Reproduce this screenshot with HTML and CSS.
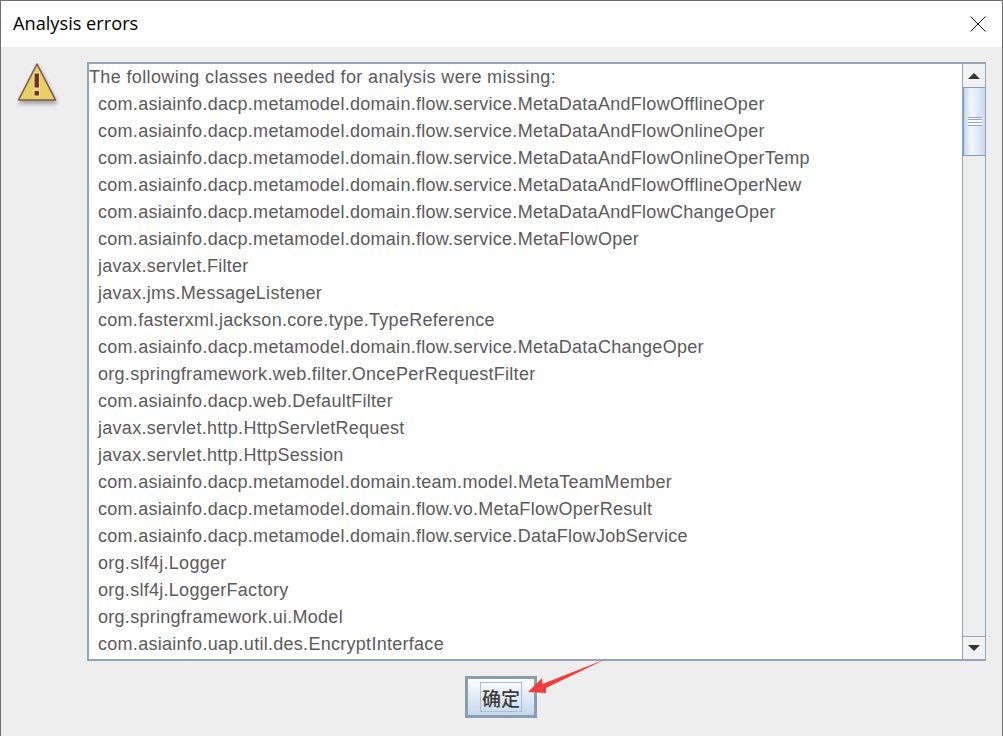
FILE: index.html
```html
<!DOCTYPE html>
<html lang="en">
<head>
  <meta charset="UTF-8">
  <title>Analysis errors</title>
  <link rel="stylesheet" href="styles.css">
</head>
<body>
  <div class="dialog">
    <div class="title-bar">
      <span class="title">Analysis errors</span>
      <svg class="close-icon" width="16" height="16" viewBox="0 0 16 16">
        <path d="M0.5 0.5L15.5 15.5M15.5 0.5L0.5 15.5" stroke="#111" stroke-width="1" fill="none"/>
      </svg>
    </div>

    <div class="content">
      <div class="message-row">
        <svg class="warn-icon" width="44" height="44" viewBox="0 0 44 44">
          <path d="M21 1L39.500 37H2.500Z" fill="#e8cf63" stroke="#7d5a4c" stroke-width="1.6" stroke-linejoin="round"/>
          <rect x="18" y="10" width="5.500" height="15" fill="#7b2f2a" stroke="#f3e6a6" stroke-width="1"/>
          <rect x="18" y="27.500" width="5.500" height="5.500" fill="#7b2f2a" stroke="#f3e6a6" stroke-width="1"/>
        </svg>

        <div class="text-pane">
          <div class="lines">
            <div class="line first">The following classes needed for analysis were missing:</div>
            <div class="line">com.asiainfo.dacp.metamodel.domain.flow.service.MetaDataAndFlowOfflineOper</div>
            <div class="line">com.asiainfo.dacp.metamodel.domain.flow.service.MetaDataAndFlowOnlineOper</div>
            <div class="line">com.asiainfo.dacp.metamodel.domain.flow.service.MetaDataAndFlowOnlineOperTemp</div>
            <div class="line">com.asiainfo.dacp.metamodel.domain.flow.service.MetaDataAndFlowOfflineOperNew</div>
            <div class="line">com.asiainfo.dacp.metamodel.domain.flow.service.MetaDataAndFlowChangeOper</div>
            <div class="line">com.asiainfo.dacp.metamodel.domain.flow.service.MetaFlowOper</div>
            <div class="line">javax.servlet.Filter</div>
            <div class="line">javax.jms.MessageListener</div>
            <div class="line">com.fasterxml.jackson.core.type.TypeReference</div>
            <div class="line">com.asiainfo.dacp.metamodel.domain.flow.service.MetaDataChangeOper</div>
            <div class="line">org.springframework.web.filter.OncePerRequestFilter</div>
            <div class="line">com.asiainfo.dacp.web.DefaultFilter</div>
            <div class="line">javax.servlet.http.HttpServletRequest</div>
            <div class="line">javax.servlet.http.HttpSession</div>
            <div class="line">com.asiainfo.dacp.metamodel.domain.team.model.MetaTeamMember</div>
            <div class="line">com.asiainfo.dacp.metamodel.domain.flow.vo.MetaFlowOperResult</div>
            <div class="line">com.asiainfo.dacp.metamodel.domain.flow.service.DataFlowJobService</div>
            <div class="line">org.slf4j.Logger</div>
            <div class="line">org.slf4j.LoggerFactory</div>
            <div class="line">org.springframework.ui.Model</div>
            <div class="line">com.asiainfo.uap.util.des.EncryptInterface</div>
          </div>

          <div class="scrollbar">
            <div class="scroll-btn"><span class="arrow-up"></span></div>
            <div class="scroll-thumb">
              <span class="grip"></span>
            </div>
            <div class="scroll-track"></div>
            <div class="scroll-btn down"><span class="arrow-down"></span></div>
          </div>
        </div>
      </div>

      <div class="button-row">
        <button class="ok-btn"><span class="ok-label">确定</span></button>
      </div>
    </div>

    <!-- red annotation arrow over the button -->
    <svg class="annotation" width="90" height="40" viewBox="0 0 90 40">
      <path d="M1 34L15 20L15.500 26L79 1L19 30L19 35Z" fill="#f23b3b"/>
    </svg>
  </div>
</body>
</html>
```

FILE: styles.css
```css
html, body {
  margin: 0;
  padding: 0;
}

body {
  width: 1003px;
  height: 736px;
  overflow: hidden;
}

.dialog {
  position: relative;
  box-sizing: border-box;
  width: 1003px;
  height: 736px;
  display: flex;
  flex-direction: column;
  border: 1px solid #6e6e6e;
  border-bottom: none;
  background: #eeeeee;
}

.title-bar {
  height: 46px;
  flex: none;
  display: flex;
  align-items: center;
  justify-content: space-between;
  padding: 0 16px 0 12px;
  background: #fff;
}

.title {
  font-family: "Open Sans", sans-serif;
  font-size: 18.200px;
  line-height: 44px;
  margin-bottom: 2px;
  color: #000;
}

.close-icon {
  display: block;
}

.content {
  flex: 1;
  display: flex;
  flex-direction: column;
  padding-top: 15px;
}

.message-row {
  display: flex;
  align-items: flex-start;
  padding-left: 15px;
}

.warn-icon {
  display: block;
  flex: none;
  margin-top: 1px;
  margin-right: 27px;
  filter: drop-shadow(1px 3px 2px rgba(0, 0, 0, 0.35));
}

.text-pane {
  box-sizing: border-box;
  width: 899px;
  height: 599px;
  display: flex;
  border: 1px solid #92a4b6;
  border-top-width: 2px;
  border-bottom-width: 2px;
  border-left-width: 2px;
  background: #fff;
}

.lines {
  flex: 1;
  overflow: hidden;
  font-family: "Liberation Sans", Arial, sans-serif;
  font-size: 18px;
  line-height: 27px;
  letter-spacing: 0.28px;
  color: #5a5a5a;
  white-space: nowrap;
}

.line {
  padding-left: 9px;
}

.line.first {
  padding-left: 0;
  letter-spacing: 0.36px;
}

.scrollbar {
  width: 23px;
  flex: none;
  display: flex;
  flex-direction: column;
  box-sizing: border-box;
  border-left: 1px solid #92a4b6;
  background: #eeeeee;
}

.scroll-btn {
  height: 23px;
  flex: none;
  display: flex;
  align-items: center;
  justify-content: center;
  background: #f2f2f2;
}

.scroll-btn.down {
  border-top: 1px solid #92a4b6;
  box-sizing: border-box;
}

.arrow-up {
  border-left: 6px solid transparent;
  border-right: 6px solid transparent;
  border-bottom: 6px solid #333;
}

.arrow-down {
  border-left: 6px solid transparent;
  border-right: 6px solid transparent;
  border-top: 6px solid #333;
}

.scroll-thumb {
  height: 69px;
  flex: none;
  box-sizing: border-box;
  display: flex;
  align-items: center;
  justify-content: center;
  border-top: 1px solid #7c9ccb;
  border-bottom: 1px solid #7c9ccb;
  border-left: 1px solid #7c9ccb;
  background: linear-gradient(90deg, #c4d7ea 0%, #f2f7fb 35%, #c9dbec 100%);
}

.grip {
  width: 14px;
  height: 7px;
  border-top: 1px solid #8aa6d6;
  border-bottom: 1px solid #8aa6d6;
  background: linear-gradient(#fff 0 1px, #8aa6d6 1px 2px, #fff 2px 4px, #8aa6d6 4px 5px, #fff 5px);
}

.scroll-track {
  flex: 1;
  background: #eeeeee;
}

.button-row {
  display: flex;
  justify-content: center;
  padding-top: 15px;
  padding-right: 1px;
}

.ok-btn {
  box-sizing: border-box;
  width: 72px;
  height: 42px;
  padding: 0;
  display: flex;
  align-items: center;
  justify-content: center;
  border: 3px solid #8a9dae;
  background: linear-gradient(#fdfeff 0%, #c4d8ea 100%);
}

.ok-label {
  box-sizing: border-box;
  width: 42px;
  height: 30px;
  display: flex;
  align-items: center;
  justify-content: center;
  border: 1px solid #a9c0d8;
  font-family: "Noto Sans CJK SC", "Liberation Sans", sans-serif;
  font-size: 19px;
  font-weight: 500;
  color: #3c3c3c;
}

.annotation {
  position: absolute;
  left: 526px;
  top: 657px;
}
```
